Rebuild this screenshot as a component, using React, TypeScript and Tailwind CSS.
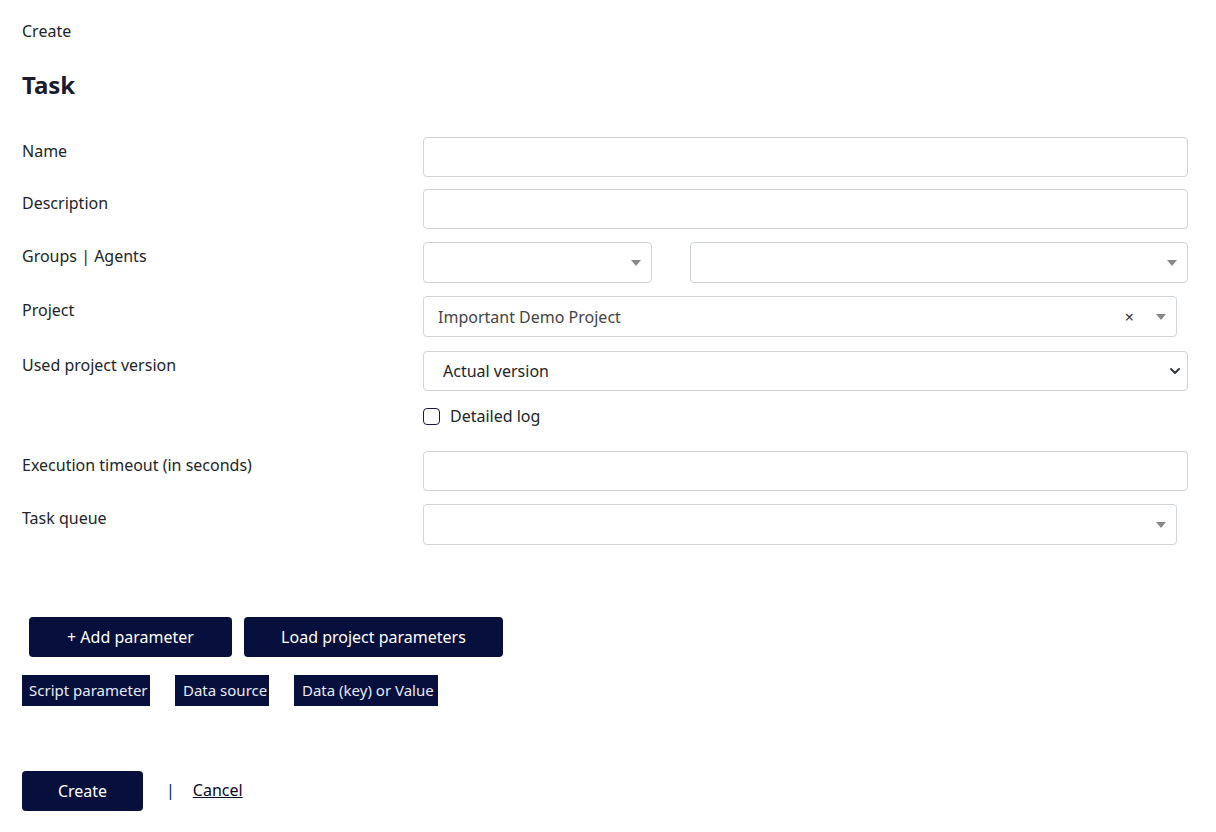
import { ChevronDown } from 'lucide-react'

const NAVY = 'bg-[#070f3d]'

function Caret() {
  return (
    <svg width="10" height="6" viewBox="0 0 10 6" className="shrink-0">
      <path d="M0 0h10L5 6z" fill="#888" />
    </svg>
  )
}

function Row({ label, children, className = '' }: { label: string; children: React.ReactNode; className?: string }) {
  return (
    <div className={`flex ${className}`}>
      <label className="w-[401px] shrink-0 pt-[2px] leading-6">{label}</label>
      <div className="flex-1">{children}</div>
    </div>
  )
}

export default function App() {
  return (
    <div className="min-h-[832px] bg-white pl-[22px] pr-[28px] text-[16px] text-[#212529]" style={{ fontFamily: '"Noto Sans", "Open Sans", sans-serif' }}>
      <p className="pt-[19px] leading-6">Create</p>
      <h1 className="mt-[26px] text-[24px] font-bold leading-8 text-[#1a1a2e]">Task</h1>

      <div className="mt-[36px] flex flex-col">
        <Row label="Name">
          <div className="h-[40px] w-[765px] rounded border border-[#ced4da]" />
        </Row>
        <Row label="Description" className="mt-[12px]">
          <div className="h-[40px] w-[765px] rounded border border-[#ced4da]" />
        </Row>
        <Row label="Groups | Agents" className="mt-[13px]">
          <div className="flex w-[765px] gap-[38px]">
            <div className="flex h-[41px] w-[229px] items-center justify-end rounded border border-[#ced4da] pr-[10px]">
              <Caret />
            </div>
            <div className="flex h-[41px] flex-1 items-center justify-end rounded border border-[#ced4da] pr-[10px]">
              <Caret />
            </div>
          </div>
        </Row>
        <Row label="Project" className="mt-[13px]">
          <div className="flex h-[41px] w-[754px] items-center rounded border border-[#ced4da] pl-[14px] pr-[10px] text-[#444]">
            <span className="flex-1">Important Demo Project</span>
            <span className="mr-[22px] text-[16px] leading-none text-[#333]">×</span>
            <Caret />
          </div>
        </Row>
        <Row label="Used project version" className="mt-[14px]">
          <div className="flex h-[40px] w-[765px] items-center rounded border border-[#ced4da] pl-[19px] pr-[4px] text-[#212529]">
            <span className="flex-1">Actual version</span>
            <ChevronDown size={16} strokeWidth={3} className="text-[#343a40]" />
          </div>
          <div className="mt-[13px] flex items-center gap-[10px]">
            <span className="h-[17px] w-[17px] rounded-[4px] border-[1.5px] border-[#1a1a3e]" />
            <span className="leading-6">Detailed log</span>
          </div>
        </Row>
        <Row label="Execution timeout (in seconds)" className="mt-[23px]">
          <div className="h-[40px] w-[765px] rounded border border-[#ced4da]" />
        </Row>
        <Row label="Task queue" className="mt-[13px]">
          <div className="flex h-[41px] w-[754px] items-center justify-end rounded border border-[#ced4da] pr-[10px]">
            <Caret />
          </div>
        </Row>
      </div>

      <div className="mt-[72px] flex gap-[12px] pl-[7px]">
        <button className={`h-[40px] w-[203px] rounded ${NAVY} text-white`}>+ Add parameter</button>
        <button className={`h-[40px] w-[259px] rounded ${NAVY} text-white`}>Load project parameters</button>
      </div>

      <div className="mt-[18px] flex gap-[25px] text-[15px] text-[#e8eaf6]">
        <span className={`flex h-[31px] w-[128px] items-center pl-[7px] ${NAVY}`}>Script parameter</span>
        <span className={`flex h-[31px] w-[94px] items-center pl-[8px] ${NAVY}`}>Data source</span>
        <span className={`flex h-[31px] w-[144px] items-center pl-[8px] ${NAVY}`}>Data (key) or Value</span>
      </div>

      <div className="mt-[65px] flex items-center">
        <button className={`h-[40px] w-[121px] rounded ${NAVY} text-white`}>Create</button>
        <span className="-mt-[3px] ml-[23px] text-[#0a1a6e]">|</span>
        <a className="-mt-[3px] ml-[18px] text-[#0a0a2a] underline">Cancel</a>
      </div>
    </div>
  )
}
